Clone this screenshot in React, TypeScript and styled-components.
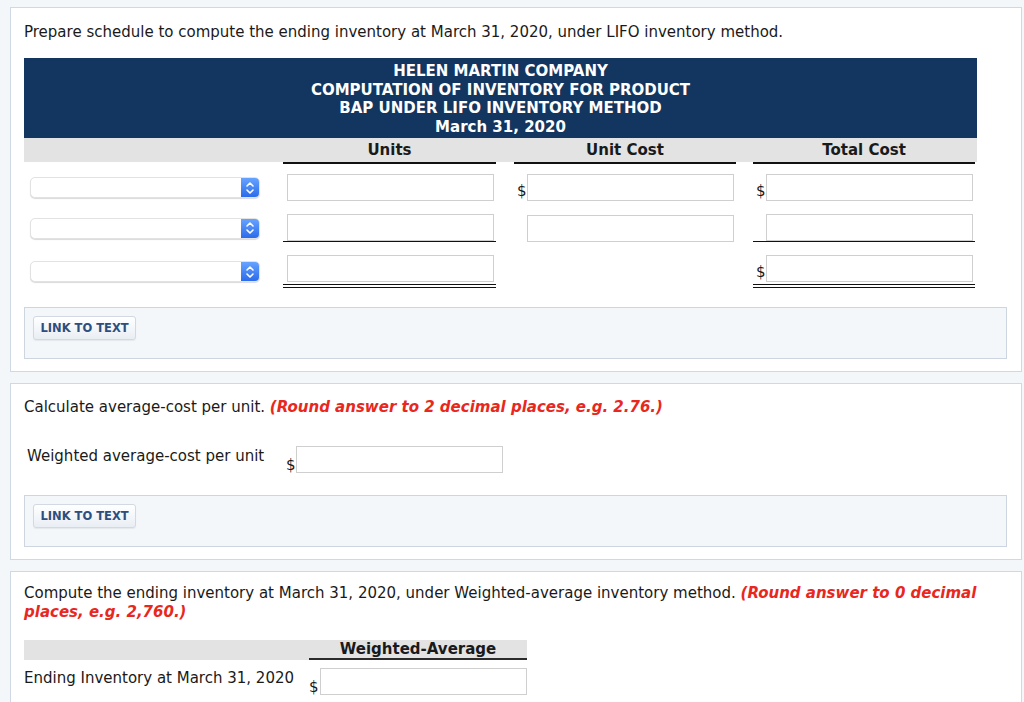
import React from "react";
import styled, { createGlobalStyle } from "styled-components";

const GlobalStyle = createGlobalStyle`
  html, body {
    margin: 0;
    padding: 0;
    background: #f4f7fa;
  }
  body {
    font-family: "DejaVu Sans", Verdana, sans-serif;
    font-size: 15px;
    color: #1a1a1a;
  }
`;

const Page = styled.div`
  display: flex;
  flex-direction: column;
  gap: 11px;
  padding: 7px 2px 0 10px;
`;

const Panel = styled.section<{ $top?: number }>`
  background: #fff;
  border: 1px solid #d0d9e3;
  padding: ${(p) => p.$top ?? 13}px 14px 12px 13px;
`;

const Prompt = styled.p`
  margin: 0;
  font-size: 15px;
  line-height: 19px;
`;

const Hint = styled.span`
  color: #e8281e;
  font-weight: bold;
  font-style: italic;
`;

const Schedule = styled.div`
  width: 953px;
  margin-top: 16px;
`;

const Title = styled.div`
  background: #12365f;
  color: #fff;
  text-align: center;
  font-weight: bold;
  font-size: 15px;
  line-height: 18.7px;
  padding: 4px 0 1px;
`;

const Grid = styled.div`
  display: grid;
  grid-template-columns: 259px 213px 18px 222px 17px 222px 2px;
`;

const HeadCell = styled.div<{ $rule?: boolean }>`
  background: #e3e3e3;
  background-clip: padding-box;
  height: 24px;
  line-height: 24px;
  text-align: center;
  font-weight: bold;
  font-size: 15px;
  border-bottom: 2px solid ${(p) => (p.$rule ? "#111" : "transparent")};
`;

const LabelCell = styled.div<{ $top: number }>`
  display: flex;
  align-items: center;
  padding: ${(p) => p.$top}px 0 0 6px;
`;

const SelectBox = styled.div`
  width: 230px;
  height: 21px;
  box-sizing: border-box;
  border: 1px solid #e2e2e2;
  border-radius: 5px;
  background: #fff;
  box-shadow: 0 1px 1px rgba(0, 0, 0, 0.15);
  display: flex;
  justify-content: flex-end;
  overflow: hidden;
`;

const SelectArrow = styled.div`
  width: 18px;
  background: linear-gradient(#66a3ff, #2c6bea);
  display: flex;
  align-items: center;
  justify-content: center;
`;

const AmountCell = styled.div<{ $top: number; $rule?: "single" | "double" }>`
  display: flex;
  align-items: flex-end;
  padding: ${(p) => p.$top}px 2px ${(p) => (p.$rule === "double" ? 2 : 0)}px 3px;
  border-bottom: ${(p) =>
    p.$rule === "single"
      ? "1px solid #111"
      : p.$rule === "double"
      ? "4px double #111"
      : "none"};
`;

const Dollar = styled.span`
  width: 10px;
  font-size: 15px;
  line-height: 16px;
  padding-bottom: 2px;
`;

const Field = styled.div<{ $w: number }>`
  width: ${(p) => p.$w}px;
  height: 27px;
  box-sizing: border-box;
  border: 1px solid #cfcfcf;
  background: #fff;
  margin-left: auto;
`;

const LinkBox = styled.div<{ $top: number }>`
  margin-top: ${(p) => p.$top}px;
  background: #f4f7fa;
  border: 1px solid #cdd6e0;
  padding: 8px 0 0 8px;
  box-sizing: border-box;
  height: 52px;
`;

const LinkButton = styled.button`
  font-family: "DejaVu Sans", Verdana, sans-serif;
  font-size: 11.5px;
  font-weight: bold;
  color: #2c4f80;
  background: linear-gradient(#ffffff, #e9eef4);
  border: 1px solid #d2d9e2;
  border-radius: 3px;
  height: 24px;
  width: 103px;
  padding: 0;
  box-shadow: 0 1px 1px rgba(0, 0, 0, 0.06);
`;

const AvgRow = styled.div`
  display: flex;
  margin-top: 29px;
  padding-left: 3px;
`;

const AvgLabel = styled.div`
  width: 259px;
  line-height: 18px;
  margin-top: 1px;
`;

const DollarLow = styled.span`
  align-self: flex-end;
  width: 10px;
  line-height: 16px;
`;

const AvgField = styled(Field)`
  margin-left: 0;
`;

const WAGrid = styled.div`
  display: grid;
  grid-template-columns: 285px 218px;
  margin-top: 18px;
  width: 503px;
`;

const WAHead = styled.div<{ $rule?: boolean }>`
  background: #e3e3e3;
  height: 20px;
  line-height: 19px;
  box-sizing: border-box;
  text-align: center;
  font-weight: bold;
  border-bottom: 2px solid ${(p) => (p.$rule ? "#2b2b2b" : "#e3e3e3")};
`;

const WALabel = styled.div`
  padding-top: 9px;
  line-height: 18px;
`;

const WAInputCell = styled.div`
  display: flex;
  align-items: flex-end;
  padding-top: 8px;
`;

const Chevrons = () => (
  <svg width="10" height="14" viewBox="0 0 10 14">
    <path
      d="M2 5 L5 2 L8 5 M2 9 L5 12 L8 9"
      fill="none"
      stroke="#fff"
      strokeWidth="1.6"
      strokeLinecap="round"
      strokeLinejoin="round"
    />
  </svg>
);

const Select = () => (
  <SelectBox>
    <SelectArrow>
      <Chevrons />
    </SelectArrow>
  </SelectBox>
);

const Gap = styled.div``;

export default function App() {
  return (
    <>
      <GlobalStyle />
      <Page>
        <Panel $top={15}>
          <Prompt>
            Prepare schedule to compute the ending inventory at March 31, 2020,
            under LIFO inventory method.
          </Prompt>
          <Schedule>
            <Title>
              HELEN MARTIN COMPANY
              <br />
              COMPUTATION OF INVENTORY FOR PRODUCT
              <br />
              BAP UNDER LIFO INVENTORY METHOD
              <br />
              March 31, 2020
            </Title>
            <Grid>
              <HeadCell />
              <HeadCell $rule>Units</HeadCell>
              <HeadCell />
              <HeadCell $rule>Unit Cost</HeadCell>
              <HeadCell />
              <HeadCell $rule>Total Cost</HeadCell>
              <HeadCell />

              <LabelCell $top={11}>
                <Select />
              </LabelCell>
              <AmountCell $top={10}>
                <Field $w={207} />
              </AmountCell>
              <Gap />
              <AmountCell $top={9}>
                <Dollar>$</Dollar>
                <Field $w={207} />
              </AmountCell>
              <Gap />
              <AmountCell $top={9}>
                <Dollar>$</Dollar>
                <Field $w={207} />
              </AmountCell>
              <Gap />

              <LabelCell $top={14}>
                <Select />
              </LabelCell>
              <AmountCell $top={13} $rule="single">
                <Field $w={207} />
              </AmountCell>
              <Gap />
              <AmountCell $top={13}>
                <Field $w={207} />
              </AmountCell>
              <Gap />
              <AmountCell $top={13} $rule="single">
                <Field $w={207} />
              </AmountCell>
              <Gap />

              <LabelCell $top={14}>
                <Select />
              </LabelCell>
              <AmountCell $top={13} $rule="double">
                <Field $w={207} />
              </AmountCell>
              <Gap />
              <Gap />
              <Gap />
              <AmountCell $top={12} $rule="double">
                <Dollar>$</Dollar>
                <Field $w={207} />
              </AmountCell>
              <Gap />
            </Grid>
          </Schedule>
          <LinkBox $top={19}>
            <LinkButton>LINK TO TEXT</LinkButton>
          </LinkBox>
        </Panel>

        <Panel $top={14}>
          <Prompt>
            Calculate average-cost per unit.{" "}
            <Hint>(Round answer to 2 decimal places, e.g. 2.76.)</Hint>
          </Prompt>
          <AvgRow>
            <AvgLabel>Weighted average-cost per unit</AvgLabel>
            <DollarLow>$</DollarLow>
            <AvgField $w={207} />
          </AvgRow>
          <LinkBox $top={22}>
            <LinkButton>LINK TO TEXT</LinkButton>
          </LinkBox>
        </Panel>

        <Panel $top={12}>
          <Prompt>
            Compute the ending inventory at March 31, 2020, under
            Weighted-average inventory method.{" "}
            <Hint>(Round answer to 0 decimal places, e.g. 2,760.)</Hint>
          </Prompt>
          <WAGrid>
            <WAHead />
            <WAHead $rule>Weighted-Average</WAHead>
            <WALabel>Ending Inventory at March 31, 2020</WALabel>
            <WAInputCell>
              <DollarLow>$</DollarLow>
              <Field $w={207} />
            </WAInputCell>
          </WAGrid>
        </Panel>
      </Page>
    </>
  );
}
